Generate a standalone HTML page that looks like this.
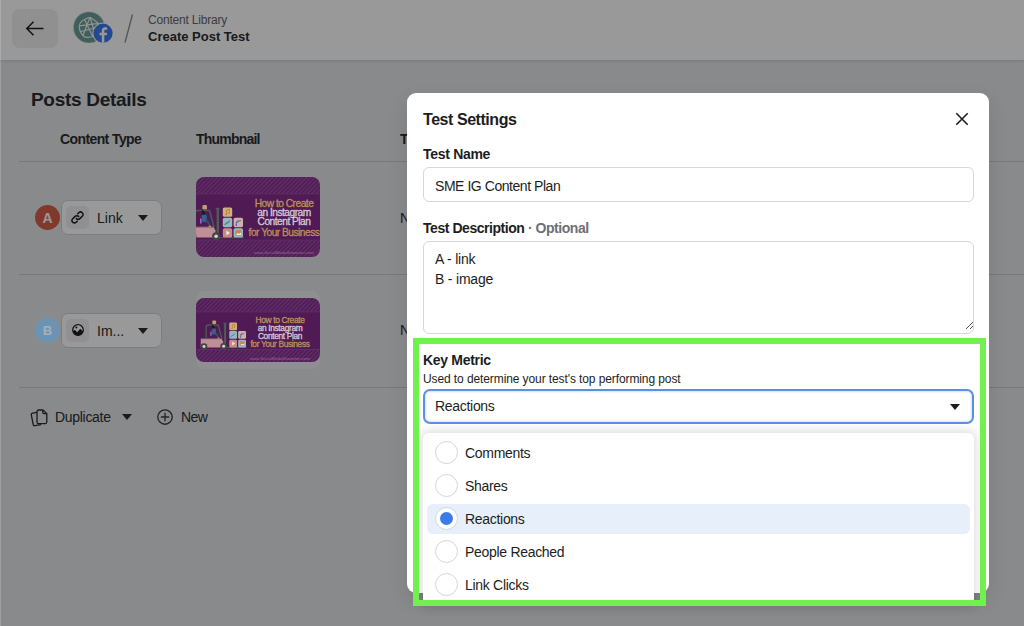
<!DOCTYPE html>
<html><head><meta charset="utf-8">
<style>
*{box-sizing:border-box;margin:0;padding:0}
html,body{width:1024px;height:626px;overflow:hidden}
body{position:relative;background:#e4e6e9;font-family:"Liberation Sans",sans-serif;color:#1c1e21}
.a{position:absolute;white-space:nowrap}
#page{position:absolute;left:0;top:0;width:1024px;height:626px;color:#2b2d31}
#hdr{position:absolute;left:0;top:0;width:1024px;height:60px;background:#fff;box-shadow:0 1px 3px rgba(0,0,0,.14)}
.back{left:12px;top:9px;width:46px;height:39px;border-radius:8px;background:#f0f0f0}
.hline{position:absolute;left:19px;width:1005px;height:1px;background:#c6c8cc}
.bold{font-weight:bold}
.pill{left:61px;width:101px;height:35px;border:1px solid #cfd1d5;border-radius:7px;background:#fff}
.isq{left:66px;width:23px;height:23px;border-radius:5px;background:#f0f1f3}
.tri{width:0;height:0;border-left:5px solid transparent;border-right:5px solid transparent;border-top:6px solid #1c1e21}
#ovl{position:absolute;left:0;top:0;width:1024px;height:626px;background:rgba(0,0,0,.4)}
#modal{position:absolute;left:407px;top:93px;width:582px;height:499.5px;background:#fff;border-radius:9px;box-shadow:0 8px 20px rgba(0,0,0,.1)}
.lbl{font-weight:bold;font-size:14px;color:#1c1e21}
.inp{left:423px;width:551px;border:1px solid #d5d7db;border-radius:6px;background:#fff}
.t14{font-size:14px;color:#1c1e21}
#green{position:absolute;left:413px;top:338px;width:573px;height:268px;border:6px solid #70f14d}
#dd{position:absolute;left:423px;top:433px;width:551px;height:172px;background:#fff;border-radius:6px;box-shadow:0 0 10px 3px rgba(0,0,0,.12)}
.radio{position:absolute;left:11.7px;width:23.4px;height:23.4px;border-radius:50%;border:1.3px solid #d4d6d9;background:#fff}
#page .t14{color:#2b2d31}
#page .tri{border-top-color:#2b2d31}
.rl{position:absolute;left:42px;font-size:14px;letter-spacing:-0.3px;color:#1c1e21}
</style></head><body>
<div id="page">
  <div id="hdr">
    <div class="a back"></div>
    <svg class="a" style="left:24px;top:19px" width="22" height="20" viewBox="0 0 22 20"><path d="M19.5 9.5H3M9.5 2.8L2.8 9.5l6.7 6.7" fill="none" stroke="#1c1e21" stroke-width="1.5"/></svg>
    <svg class="a" style="left:72px;top:10px" width="44" height="36" viewBox="0 0 44 36">
      <circle cx="17" cy="17.4" r="15.6" fill="#6a9f9b" stroke="#fff" stroke-width="0.6" stroke-opacity=".5"/>
      <g fill="none" stroke="#f2f2f2" stroke-width="1.2" stroke-linejoin="round">
        <path d="M18 7.2C12 9 7.5 12 7.2 16c-.2 5 3 9.5 6 11.2 3 .3 6.5-.2 9-1.2"/>
        <path d="M18 7.2L26.5 13.3M18 7.2L10.8 26M18 7.2L23.2 24.5M7.3 15.8L26.5 13.3M8.8 21.5L25.5 17.5M12.5 9.5L21 27"/>
      </g>
      <circle cx="31" cy="23.2" r="10.6" fill="#fff"/>
      <circle cx="31" cy="23.2" r="9.6" fill="#3b7cf0"/>
      <path d="M32.3 32.8V25.3h2.4l.4-2.6h-2.8v-1.6c0-.8.3-1.3 1.4-1.3h1.5v-2.4c-.3 0-1.1-.1-2-.1-2 0-3.4 1.2-3.4 3.5v1.9h-2.3v2.6h2.3v7.5z" fill="#fff"/>
    </svg>
    <svg class="a" style="left:124px;top:14px" width="10" height="30"><path d="M8.5 0.5L1 28.5" stroke="#8a8d91" stroke-width="1.3"/></svg>
    <div class="a" style="left:148px;top:13px;font-size:12px;letter-spacing:-0.2px;color:#65676b">Content Library</div>
    <div class="a bold" style="left:148px;top:29px;font-size:13px;color:#2b2d31">Create Post Test</div>
  </div>
  <div class="a bold" style="left:31px;top:89px;font-size:19px;letter-spacing:-0.3px">Posts Details</div>
  <div class="a bold" style="left:60px;top:131px;font-size:14px;letter-spacing:-0.6px">Content Type</div>
  <div class="a bold" style="left:196px;top:131px;font-size:14px;letter-spacing:-0.8px">Thumbnail</div>
  <div class="a bold" style="left:400px;top:131px;font-size:14px">T</div>
  <div class="hline" style="top:161px"></div>
  <div class="hline" style="top:274px"></div>
  <div class="hline" style="top:387px"></div>

  <!-- row A -->
  <div class="a" style="left:35px;top:205px;width:25px;height:25px;border-radius:50%;background:#d5604a;color:#fff;font-weight:bold;font-size:14px;text-align:center;line-height:26px">A</div>
  <div class="a pill" style="top:200px"></div>
  <div class="a isq" style="top:206px"></div>
  <svg class="a" style="left:70px;top:210px" width="15" height="15" viewBox="0 0 16 16"><g fill="none" stroke="#1c1e21" stroke-width="1.6" stroke-linecap="round"><path d="M6.8 9.2a2.6 2.6 0 0 0 3.7 0l2.6-2.6a2.6 2.6 0 0 0-3.7-3.7L8.2 4.1"/><path d="M9.2 6.8a2.6 2.6 0 0 0-3.7 0L2.9 9.4a2.6 2.6 0 0 0 3.7 3.7l1.2-1.2"/></g></svg>
  <div class="a t14" style="left:97px;top:210px">Link</div>
  <div class="a tri" style="left:138px;top:215px"></div>
  <div class="a" style="left:400px;top:210px;font-size:14px">N</div>
  <!-- row B -->
  
  <div class="a pill" style="top:313px"></div>
  <div class="a isq" style="top:319px"></div>
  <svg class="a" style="left:71.5px;top:324.3px" width="12" height="12" viewBox="0 0 12 12"><defs><clipPath id="ic"><circle cx="6" cy="6" r="5.4"/></clipPath></defs><g clip-path="url(#ic)"><rect width="12" height="12" fill="#fff"/><path d="M0 12V8.3l2.8-2.6 2.4 2.6 3-3.6L12 8.3V12z" fill="#1c1e21"/><circle cx="4.4" cy="3.6" r="1" fill="#1c1e21"/></g><circle cx="6" cy="6" r="5.3" fill="none" stroke="#1c1e21" stroke-width="1.3"/></svg>
  <div class="a t14" style="left:97px;top:323px">Im...</div>
  <div class="a tri" style="left:138px;top:328px"></div>
  <div class="a" style="left:400px;top:322px;font-size:14px">N</div>
  <!-- bottom actions -->
  <svg class="a" style="left:30px;top:408.8px" width="18" height="18" viewBox="0 0 18 18"><g fill="none" stroke="#2a2d31" stroke-width="1.3" stroke-linejoin="round"><path d="M8.6 1h4.4l3.8 3.6v8.4a1.6 1.6 0 0 1-1.6 1.6H8.6A1.6 1.6 0 0 1 7 13V2.6A1.6 1.6 0 0 1 8.6 1z"/><path d="M12.8 1.2v2.4a1 1 0 0 0 1 1h2.8"/><path d="M7 3.3L2.4 4.1a1.4 1.4 0 0 0-1.1 1.6l1.9 9.9a1.4 1.4 0 0 0 1.6 1.1l6.2-1.1"/></g></svg>
  <div class="a t14" style="left:55px;top:409px;letter-spacing:-0.3px">Duplicate</div>
  <div class="a tri" style="left:122px;top:414px"></div>
  <svg class="a" style="left:156px;top:408px" width="18" height="18" viewBox="0 0 18 18"><g fill="none" stroke="#3a3d42" stroke-width="1.35"><circle cx="9" cy="9" r="7.2"/><path d="M9 4.85v8.3M4.85 9h8.3"/></g></svg>
  <div class="a t14" style="left:181px;top:409px;letter-spacing:-0.6px">New</div>
</div>
<div id="ovl"></div>
<div class="a" style="left:0;top:0;width:1px;height:626px;background:rgba(255,255,255,.18)"></div>
<div class="a" style="left:35px;top:318px;width:25px;height:25px;border-radius:50%;background:#6b94b4;color:#a9b0b5;font-weight:bold;font-size:13px;text-align:center;line-height:26px">B</div>

<div class="a" style="left:196px;top:291px;width:124px;height:78px;border-radius:8px;background:rgba(255,255,255,.05)"></div>
<div class="a" style="left:196px;top:177px;width:124px;height:80px"><svg width="124" height="80" viewBox="0 0 124 80"><defs><pattern id="st1" width="3.0" height="3.0" patternUnits="userSpaceOnUse" patternTransform="rotate(45)"><rect width="3.0" height="3.0" fill="#521d56"/><rect width="1.1" height="3.0" fill="#62316a"/></pattern><clipPath id="cp1"><rect width="124" height="80" rx="8"/></clipPath></defs><g clip-path="url(#cp1)"><rect width="124" height="80" fill="url(#st1)"/><rect y="16.5" width="124" height="47.0" fill="#501b54"/><rect y="16.5" width="124" height="0.8" fill="#603565"/><rect y="62.7" width="124" height="0.8" fill="#603565"/><text x="88" y="30.2" fill="#bc8f5d" stroke="#bc8f5d" stroke-width="0.3" font-family="Liberation Sans" font-size="10.2" text-anchor="middle" letter-spacing="-0.5">How to Create</text><text x="88" y="39" fill="#d2cad6" stroke="#d2cad6" stroke-width="0.3" font-family="Liberation Sans" font-size="10.2" text-anchor="middle" letter-spacing="-0.5">an Instagram</text><text x="88" y="48.2" fill="#d2cad6" stroke="#d2cad6" stroke-width="0.3" font-family="Liberation Sans" font-size="10.2" text-anchor="middle" letter-spacing="-0.5">Content Plan</text><text x="88" y="58.5" fill="#bc8f5d" stroke="#bc8f5d" stroke-width="0.3" font-family="Liberation Sans" font-size="10.2" text-anchor="middle" letter-spacing="-0.5">for Your Business</text><text x="88" y="76.5" fill="#8e6d93" font-family="Liberation Sans" font-size="4.2" text-anchor="middle">www.SocialMediaExaminer.com</text><g transform=""><rect x="6.4" y="28" width="4.6" height="4.6" rx="1.4" fill="#c39c6c"/><path d="M-1 50V36.5Q-1 33.5 2 33.5H13.5L18 50" fill="none" stroke="#4b5a52" stroke-width="1.6" stroke-linejoin="round"/><rect x="20.6" y="31.2" width="2.4" height="30" fill="#4e5c55"/><rect x="19.6" y="30.8" width="4" height="1.4" fill="#4e5c55"/><path d="M-7.5 50H17.5L19.5 53.5V60.5H-7.5z" fill="#c08e96"/><path d="M-7.5 50H17.5" stroke="#5b6560" stroke-width="1"/><rect x="4" y="41.5" width="1.6" height="5" fill="#a765c4"/><rect x="5.8" y="37.6" width="5" height="7.4" rx="1.8" fill="#3b5f8c"/><path d="M9 43.5h3.5l2 5h-1.6l-1.6-3H9z" fill="#2f4f7c"/><rect x="12.6" y="48.6" width="2.4" height="1.4" fill="#c69a42"/><circle cx="7.6" cy="36" r="1.7" fill="#1b1b1b"/><circle cx="6.6" cy="34.2" r="1.1" fill="#1b1b1b"/><path d="M11.5 42.5l3 2" stroke="#333" stroke-width="0.9"/><circle cx="20.1" cy="59.2" r="4" fill="#444"/><circle cx="20.1" cy="59.2" r="1.8" fill="#d4d4d4"/><circle cx="-3.6" cy="59.4" r="4" fill="#444"/><circle cx="-3.6" cy="59.4" r="1.8" fill="#d4d4d4"/><rect x="23" y="60.2" width="25" height="1" fill="#4e5c55"/><rect x="26.8" y="30.4" width="9.4" height="9.4" rx="1.6" fill="#cdb27e"/><rect x="26.8" y="40.8" width="9.4" height="9.4" rx="1.6" fill="#93b7c3"/><rect x="37.6" y="40.8" width="9.4" height="9.4" rx="1.6" fill="#cfb1aa"/><rect x="26.8" y="51.2" width="9.4" height="9.4" rx="1.6" fill="#c98a84"/><rect x="37.6" y="51.2" width="9.4" height="9.4" rx="1.6" fill="#92bccb"/><path d="M30.6 37.6v-4.6l2.8-0.8v3.6" fill="none" stroke="#c07a3a" stroke-width="0.9"/><circle cx="30" cy="37.6" r="0.8" fill="#c07a3a"/><circle cx="32.8" cy="36.2" r="0.8" fill="#c07a3a"/><path d="M29 47.5l2-2M31.5 46l2-2" stroke="#687a8a" stroke-width="1.2" stroke-linecap="round"/><path d="M40 48.6a5.4 5.4 0 0 1 5-5M40 46.2a3 3 0 0 1 2.6-2.6" fill="none" stroke="#4a66b0" stroke-width="1"/><circle cx="40.4" cy="48.2" r="0.7" fill="#4a66b0"/><path d="M30.4 53.6v4.6l3.6-2.3z" fill="#ececec"/><rect x="39.4" y="53" width="5.8" height="5.8" rx="0.8" fill="#c8874c"/><path d="M40 58l2-2 1.4 1 1.6-1.6v2.6z" fill="#eee"/></g></g></svg></div>
<div class="a" style="left:196px;top:298px;width:124px;height:64px"><svg width="124" height="64" viewBox="0 0 124 64"><defs><pattern id="st2" width="3.0" height="3.0" patternUnits="userSpaceOnUse" patternTransform="rotate(45)"><rect width="3.0" height="3.0" fill="#521d56"/><rect width="1.1" height="3.0" fill="#62316a"/></pattern><clipPath id="cp2"><rect width="124" height="64" rx="8"/></clipPath></defs><g clip-path="url(#cp2)"><rect width="124" height="64" fill="url(#st2)"/><rect y="13.5" width="124" height="38.5" fill="#501b54"/><rect y="13.5" width="124" height="0.8" fill="#603565"/><rect y="51.2" width="124" height="0.8" fill="#603565"/><text x="84" y="25.2" fill="#bc8f5d" stroke="#bc8f5d" stroke-width="0.3" font-family="Liberation Sans" font-size="8.4" text-anchor="middle" letter-spacing="-0.35">How to Create</text><text x="84" y="32.5" fill="#d2cad6" stroke="#d2cad6" stroke-width="0.3" font-family="Liberation Sans" font-size="8.4" text-anchor="middle" letter-spacing="-0.35">an Instagram</text><text x="84" y="40.5" fill="#d2cad6" stroke="#d2cad6" stroke-width="0.3" font-family="Liberation Sans" font-size="8.4" text-anchor="middle" letter-spacing="-0.35">Content Plan</text><text x="84" y="48.5" fill="#bc8f5d" stroke="#bc8f5d" stroke-width="0.3" font-family="Liberation Sans" font-size="8.4" text-anchor="middle" letter-spacing="-0.35">for Your Business</text><text x="84" y="61.5" fill="#8e6d93" font-family="Liberation Sans" font-size="4.2" text-anchor="middle">www.SocialMediaExaminer.com</text><g transform="translate(11,-0.8) scale(0.83)"><rect x="6.4" y="28" width="4.6" height="4.6" rx="1.4" fill="#c39c6c"/><path d="M-1 50V36.5Q-1 33.5 2 33.5H13.5L18 50" fill="none" stroke="#4b5a52" stroke-width="1.6" stroke-linejoin="round"/><rect x="20.6" y="31.2" width="2.4" height="30" fill="#4e5c55"/><rect x="19.6" y="30.8" width="4" height="1.4" fill="#4e5c55"/><path d="M-7.5 50H17.5L19.5 53.5V60.5H-7.5z" fill="#c08e96"/><path d="M-7.5 50H17.5" stroke="#5b6560" stroke-width="1"/><rect x="4" y="41.5" width="1.6" height="5" fill="#a765c4"/><rect x="5.8" y="37.6" width="5" height="7.4" rx="1.8" fill="#3b5f8c"/><path d="M9 43.5h3.5l2 5h-1.6l-1.6-3H9z" fill="#2f4f7c"/><rect x="12.6" y="48.6" width="2.4" height="1.4" fill="#c69a42"/><circle cx="7.6" cy="36" r="1.7" fill="#1b1b1b"/><circle cx="6.6" cy="34.2" r="1.1" fill="#1b1b1b"/><path d="M11.5 42.5l3 2" stroke="#333" stroke-width="0.9"/><circle cx="20.1" cy="59.2" r="4" fill="#444"/><circle cx="20.1" cy="59.2" r="1.8" fill="#d4d4d4"/><circle cx="-3.6" cy="59.4" r="4" fill="#444"/><circle cx="-3.6" cy="59.4" r="1.8" fill="#d4d4d4"/><rect x="23" y="60.2" width="25" height="1" fill="#4e5c55"/><rect x="26.8" y="30.4" width="9.4" height="9.4" rx="1.6" fill="#cdb27e"/><rect x="26.8" y="40.8" width="9.4" height="9.4" rx="1.6" fill="#93b7c3"/><rect x="37.6" y="40.8" width="9.4" height="9.4" rx="1.6" fill="#cfb1aa"/><rect x="26.8" y="51.2" width="9.4" height="9.4" rx="1.6" fill="#c98a84"/><rect x="37.6" y="51.2" width="9.4" height="9.4" rx="1.6" fill="#92bccb"/><path d="M30.6 37.6v-4.6l2.8-0.8v3.6" fill="none" stroke="#c07a3a" stroke-width="0.9"/><circle cx="30" cy="37.6" r="0.8" fill="#c07a3a"/><circle cx="32.8" cy="36.2" r="0.8" fill="#c07a3a"/><path d="M29 47.5l2-2M31.5 46l2-2" stroke="#687a8a" stroke-width="1.2" stroke-linecap="round"/><path d="M40 48.6a5.4 5.4 0 0 1 5-5M40 46.2a3 3 0 0 1 2.6-2.6" fill="none" stroke="#4a66b0" stroke-width="1"/><circle cx="40.4" cy="48.2" r="0.7" fill="#4a66b0"/><path d="M30.4 53.6v4.6l3.6-2.3z" fill="#ececec"/><rect x="39.4" y="53" width="5.8" height="5.8" rx="0.8" fill="#c8874c"/><path d="M40 58l2-2 1.4 1 1.6-1.6v2.6z" fill="#eee"/></g></g></svg></div>
<div id="modal">
  <div class="a bold" style="left:16px;top:18px;font-size:16px;letter-spacing:-0.45px;color:#1c1e21">Test Settings</div>
  <svg class="a" style="left:547px;top:18px" width="16" height="16" viewBox="0 0 16 16"><path d="M2.3 2.3L13.7 13.7M13.7 2.3L2.3 13.7" stroke="#1c1e21" stroke-width="1.6"/></svg>
  <div class="a lbl" style="left:16px;top:53px;letter-spacing:-0.3px">Test Name</div>
  <div class="a inp" style="left:16px;top:74px;height:35px"></div>
  <div class="a t14" style="left:28px;top:85px;letter-spacing:-0.45px">SME IG Content Plan</div>
  <div class="a lbl" style="left:16px;top:127px;letter-spacing:-0.45px">Test Description <span style="font-weight:bold;color:#6d7075">· Optional</span></div>
  <div class="a inp" style="left:16px;top:148px;height:93px"></div>
  <div class="a t14" style="left:28px;top:157px;line-height:19.5px;letter-spacing:-0.2px">A - link<br>B - image</div>
  <svg class="a" style="left:556.5px;top:227px" width="10" height="10" viewBox="0 0 10 10"><path d="M9 2L2 9M9 6L6 9" stroke="#555" stroke-width="1"/></svg>
  <div class="a lbl" style="left:16px;top:259px;letter-spacing:-0.3px">Key Metric</div>
  <div class="a" style="left:16px;top:279px;font-size:12px;letter-spacing:-0.1px;color:#1c1e21">Used to determine your test's top performing post</div>
  <div class="a" style="left:16px;top:295.5px;width:551px;height:35px;border:2px solid #5a90ea;border-radius:7px;background:#fff;box-shadow:inset 0 0 2px 1px rgba(90,144,234,.25)"></div>
  <div class="a t14" style="left:28px;top:305px;letter-spacing:-0.3px">Reactions</div>
  <div class="a tri" style="left:542.5px;top:310.5px;border-top-color:#1c1e21"></div>
</div>
<div id="dd">
  <div class="a" style="left:4px;top:70.5px;width:543px;height:30.5px;border-radius:6px;background:#e7effa"></div>
  <div class="radio" style="top:8px"></div><div class="rl" style="top:12px">Comments</div>
  <div class="radio" style="top:41px"></div><div class="rl" style="top:45px">Shares</div>
  <div class="radio" style="top:74px"></div><div class="a" style="left:17px;top:79px;width:13px;height:13px;border-radius:50%;background:#3b7be9"></div><div class="rl" style="top:78px">Reactions</div>
  <div class="radio" style="top:107px"></div><div class="rl" style="top:111px">People Reached</div>
  <div class="radio" style="top:140px"></div><div class="rl" style="top:144px">Link Clicks</div>
</div>
<div id="green"></div>
</body></html>
